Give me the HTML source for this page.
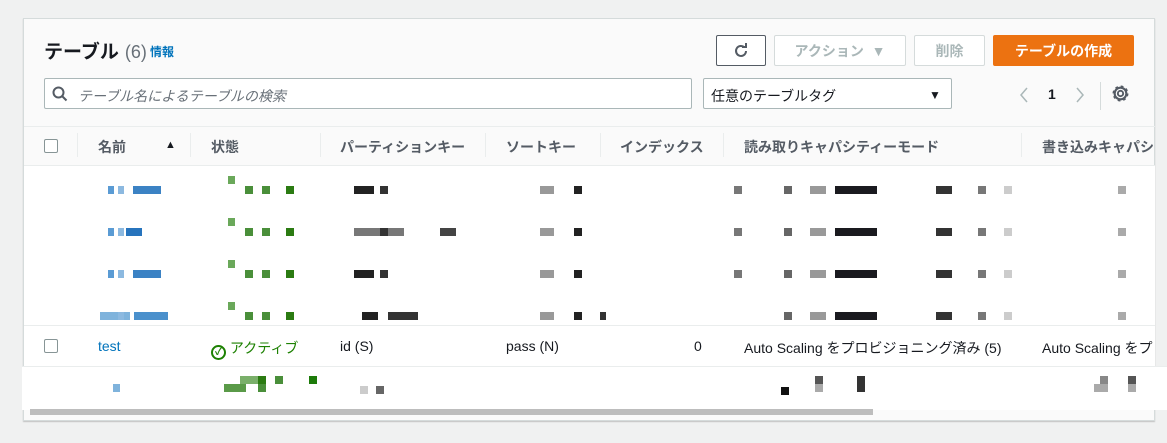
<!DOCTYPE html>
<html><head><meta charset="utf-8"><style>
*{box-sizing:border-box;margin:0;padding:0}
body{width:1167px;height:443px;background:#f0f1f1;font-family:"Liberation Sans","Noto Sans CJK JP",sans-serif;position:relative;overflow:hidden;color:#16191f}
.a{position:absolute}
.card{left:23px;top:18px;width:1132px;height:403px;background:#fafafa;border:1px solid #d5dbdb;box-shadow:0 1px 1px rgba(0,0,0,.2)}
.btn{position:absolute;height:31px;border:1px solid #d5dbdb;background:#fff;font-size:14px;font-weight:bold;color:#aab7b8;display:flex;align-items:center;justify-content:center;border-radius:2px}
.hd{font-size:14px;font-weight:bold;color:#545b64;top:137px}
.dv{position:absolute;top:133px;width:1px;height:24px;background:#eaeded}
.wrow{left:24px;width:1131px;background:#fff;border-top:1px solid #eaeded}
.p{position:absolute;height:8px}
.cb{position:absolute;width:14px;height:14px;border:1px solid #879596;border-radius:2px;background:#fff}
.t{font-size:14px;top:338px}
</style></head><body>
<div class="a card"></div>
<div class="a" style="left:44px;top:37px;font-size:19px;font-weight:bold;white-space:nowrap">テーブル<span style="font-weight:normal;color:#687078;font-size:18px;margin-left:6px">(6)</span></div>
<div class="a" style="left:150px;top:43px;font-size:12px;font-weight:bold;color:#0073bb">情報</div>
<div class="btn" style="left:716px;top:35px;width:50px;border-color:#545b64;color:#545b64">
<svg width="18" height="18" viewBox="0 0 18 18"><path d="M14 9a5 5 0 1 1-1.6-3.7" fill="none" stroke="#545b64" stroke-width="2"/><path d="M10 5h4V1" fill="none" stroke="#545b64" stroke-width="2"/></svg></div>
<div class="btn" style="left:774px;top:35px;width:132px">アクション&nbsp; ▼</div>
<div class="btn" style="left:914px;top:35px;width:71px">削除</div>
<div class="btn" style="left:993px;top:35px;width:141px;background:#ec7211;border-color:#ec7211;color:#fff">テーブルの作成</div>
<div class="a" style="left:44px;top:78px;width:648px;height:31px;background:#fff;border:1px solid #aab7b8;border-radius:2px"></div>
<svg class="a" style="left:52px;top:86px" width="16" height="16" viewBox="0 0 16 16"><circle cx="6.5" cy="6.5" r="5" fill="none" stroke="#545b64" stroke-width="2"/><path d="M10 10l4.5 4.5" stroke="#545b64" stroke-width="2"/></svg>
<div class="a" style="left:78px;top:86px;font-size:14px;font-style:italic;color:#687078">テーブル名によるテーブルの検索</div>
<div class="a" style="left:703px;top:78px;width:249px;height:31px;background:#fff;border:1px solid #aab7b8;border-radius:2px"></div>
<div class="a" style="left:711px;top:86px;font-size:14px">任意のテーブルタグ</div>
<div class="a" style="left:929px;top:88px;font-size:12px;color:#16191f">▼</div>
<svg class="a" style="left:1019px;top:86px" width="10" height="18" viewBox="0 0 10 18"><path d="M8 2L2 9l6 7" fill="none" stroke="#aab7b8" stroke-width="1.5"/></svg>
<div class="a" style="left:1048px;top:86px;font-size:14px;font-weight:bold">1</div>
<svg class="a" style="left:1075px;top:86px" width="10" height="18" viewBox="0 0 10 18"><path d="M2 2l6 7-6 7" fill="none" stroke="#aab7b8" stroke-width="1.5"/></svg>
<div class="a" style="left:1100px;top:82px;width:1px;height:28px;background:#d5dbdb"></div>
<svg class="a" style="left:1112px;top:85px" width="17" height="17" viewBox="0 0 16 16"><circle cx="8" cy="8" r="2.5" fill="none" stroke="#545b64" stroke-width="1.8"/><circle cx="8" cy="8" r="5.5" fill="none" stroke="#545b64" stroke-width="2"/><circle cx="8" cy="8" r="6.5" fill="none" stroke="#545b64" stroke-width="2" stroke-dasharray="2.5 2.6"/></svg>
<div class="a" style="left:24px;top:126px;width:1131px;height:1px;background:#eaeded"></div>
<div class="cb" style="left:44px;top:139px"></div>
<div class="a hd" style="left:98px">名前</div><div class="a" style="left:165px;top:139px;font-size:11px">▲</div>
<div class="a hd" style="left:211px">状態</div>
<div class="a hd" style="left:340px">パーティションキー</div>
<div class="a hd" style="left:506px">ソートキー</div>
<div class="a hd" style="left:620px">インデックス</div>
<div class="a hd" style="left:744px">読み取りキャパシティーモード</div>
<div class="a hd" style="left:1042px">書き込みキャパシ</div>
<div class="dv" style="left:77px"></div><div class="dv" style="left:190px"></div><div class="dv" style="left:320px"></div><div class="dv" style="left:485px"></div><div class="dv" style="left:600px"></div><div class="dv" style="left:723px"></div><div class="dv" style="left:1021px"></div>
<div class="a wrow" style="top:165px;height:161px;border-top-color:#eaeded"></div>
<div class="a wrow" style="top:325px;height:41px"></div>
<div class="a" style="left:22px;top:366px;width:1145px;height:44px;background:#fff;border-top:1px solid #eaeded"></div>
<div class="a" style="left:30px;top:409px;width:843px;height:6px;background:#bdbdbd"></div>
<div id="b"></div>
<div class="cb" style="left:44px;top:339px"></div>
<div class="a t" style="left:98px;color:#0073bb">test</div>
<div class="a t" style="left:211px;color:#1d8102"><span style="display:inline-block;width:15px;height:15px;border:2px solid #1d8102;border-radius:50%;vertical-align:-2px;font-size:10px;line-height:11px;text-align:center;font-weight:bold">✓</span> アクティブ</div>
<div class="a t" style="left:340px">id (S)</div>
<div class="a t" style="left:506px">pass (N)</div>
<div class="a t" style="left:694px">0</div>
<div class="a t" style="left:744px">Auto Scaling をプロビジョニング済み (5)</div>
<div class="a t" style="left:1042px">Auto Scaling をプ</div>
<script>
var h='';
[186,228,270,312].forEach(function(y,i){
 var r=[[108,6,'#5a9bd4'],[118,6,'#8cb9e0'],[133,28,'#3b82c4'],
 [245,8,'#4a8f3a'],[262,8,'#4a8f3a'],[286,8,'#2b7b12'],
 [354,20,'#222'],[380,8,'#333'],
 [540,14,'#999'],[574,8,'#222'],
 [734,8,'#777'],[784,8,'#666'],[810,16,'#999'],[835,42,'#1a1a1f'],[936,16,'#333'],[978,8,'#777'],[1004,8,'#ccc'],[1118,8,'#aaa']];
 if(i==1){r[2]=[126,16,'#2774bd'];r[6]=[354,50,'#777'];r.push([440,16,'#444'])}
 if(i==3){r[0]=[100,30,'#7fb3dc'];r[2]=[134,34,'#4a90cc'];r[6]=[362,16,'#222'];r[7]=[388,30,'#333'];r.push([600,6,'#333']);r.splice(10,1)}
 r.forEach(function(q){h+='<div class="p" style="left:'+q[0]+'px;top:'+y+'px;width:'+q[1]+'px;background:'+q[2]+'"></div>'});
 h+='<div class="p" style="left:228px;top:'+(y-10)+'px;width:7px;background:#6aa85a"></div>';
});
[[113,384,7,'#7fb3dc'],[224,384,22,'#5a9a48'],[240,376,22,'#7aaf6a'],[258,376,8,'#2b7b12'],[258,384,8,'#4a8f3a'],[275,376,8,'#4a8f3a'],[309,376,8,'#1d7b0a'],[360,386,8,'#ccc'],[376,386,8,'#666'],[781,387,8,'#111'],[815,376,8,'#555'],[815,384,8,'#aaa'],[857,376,8,'#333'],[857,384,8,'#333'],[1100,376,8,'#888'],[1094,384,14,'#aaa'],[1128,376,8,'#555'],[1128,384,8,'#aaa']].forEach(function(q){h+='<div class="p" style="left:'+q[0]+'px;top:'+q[1]+'px;width:'+q[2]+'px;background:'+q[3]+'"></div>'});
document.getElementById('b').innerHTML=h;
</script>
</body></html>
